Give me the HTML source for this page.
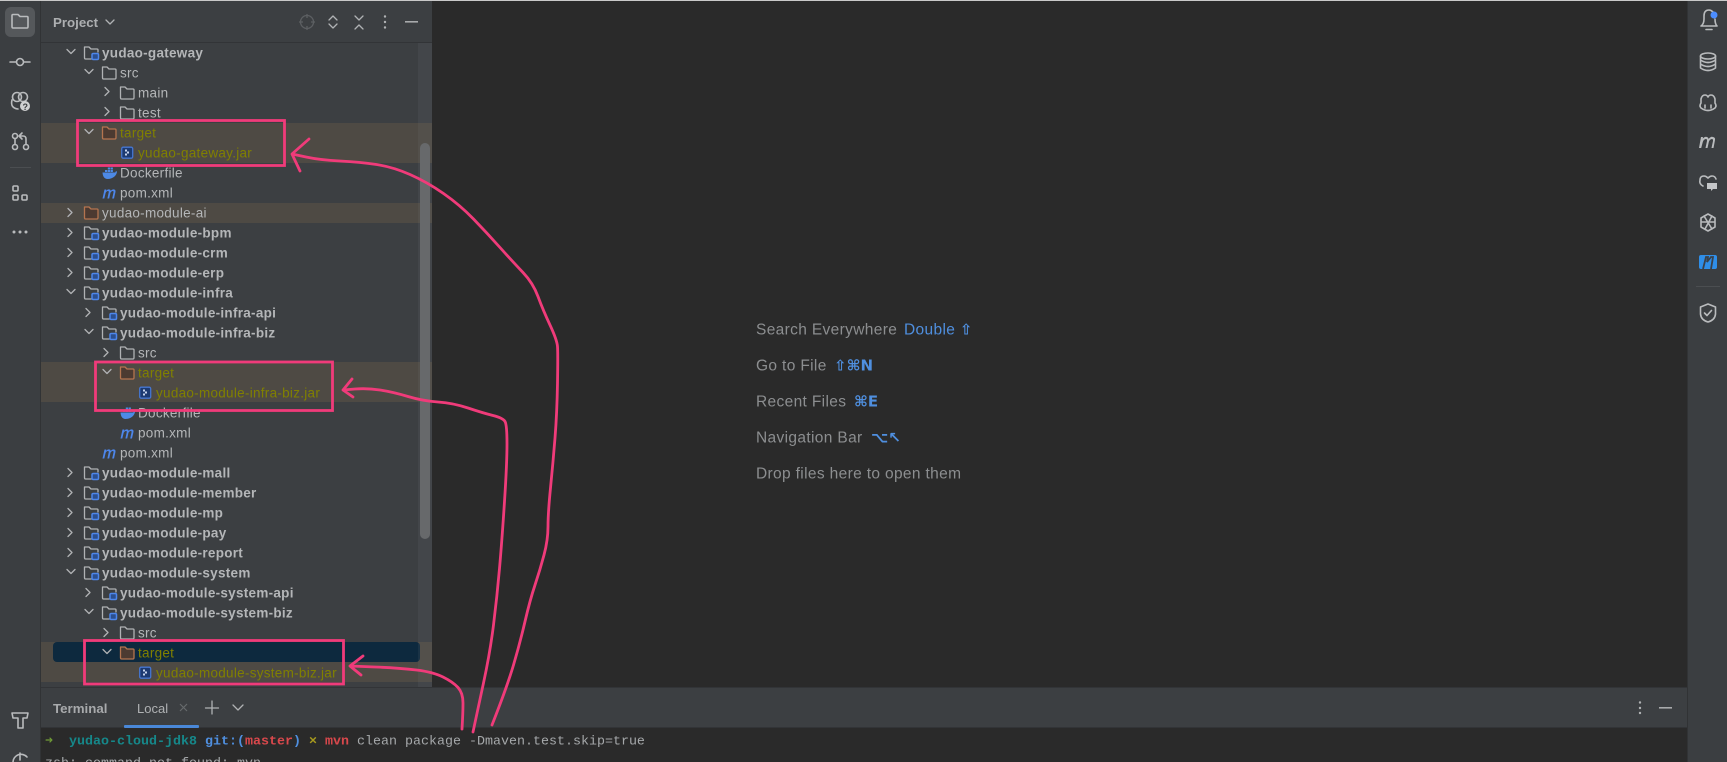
<!DOCTYPE html>
<html><head><meta charset="utf-8"><title>Project</title>
<style>
html,body{margin:0;padding:0;background:#2b2b2b;width:1727px;height:762px;overflow:hidden}
svg{display:block;filter:blur(.35px)}
text{font-family:"Liberation Sans",sans-serif;font-size:13.5px;letter-spacing:.28px;fill:#b4b6b8}
.b{font-weight:700}
.o{fill:#808000}
.h{font-size:13.3px;letter-spacing:0}
.e{font-size:15.5px;letter-spacing:.35px;fill:#8c8e90}
.k{font-size:15.5px;letter-spacing:.35px;fill:#4f8fdf}
.u{font-family:"DejaVu Sans",sans-serif;font-size:15px;letter-spacing:0;font-weight:700}
.m{font-family:"Liberation Mono",monospace;font-size:13.33px;letter-spacing:0;fill:#a9b7c6}
.s{fill:none;stroke:#b0b2b4;stroke-width:1.3;stroke-linecap:round;stroke-linejoin:round}
.i{fill:none;stroke:#b9bbbd;stroke-width:1.6;stroke-linecap:round;stroke-linejoin:round}
.p{fill:none;stroke:#f03b7a;stroke-width:2.8;stroke-linecap:round;stroke-linejoin:round}
.x{fill:none;stroke:#f03b7a;stroke-width:2.8}
</style></head><body>
<svg width="1727" height="762" viewBox="0 0 1727 762" xmlns="http://www.w3.org/2000/svg">
<defs>
<path id="cd" class="s" d="M-4-2 0 2 4-2"/>
<path id="cr" class="s" d="M-2-4 2 0-2 4"/>
<path id="fo" class="s" d="M.5-5.5H5L7-3.5H13Q14-3.5 14-2.500V5Q14 6.500 13 6.500H1.500Q.5 6.500 .5 5Z"/>
<g id="mod"><path class="s" d="M7 6.500H1.500Q.5 6.500 .5 5V-5.500H5L7-3.500H13Q14-3.500 14-2.500V-.5"/><rect x="8" y="1" width="6.500" height="6" rx="1.300" fill="#2b4f8f" stroke="#4d86ea" stroke-width="1.500"/></g>
<path id="tg" d="M.5-5.500H5L7-3.500H13Q14-3.500 14-2.500V5Q14 6.500 13 6.500H1.500Q.5 6.500 .5 5Z" fill="#4c3a31" stroke="#b4744f" stroke-width="1.300" stroke-linejoin="round"/>
<g id="jar"><rect x=".7" y="-5.300" width="11" height="11" rx="1.500" fill="#1d3a70" stroke="#4576d0" stroke-width="1.300"/><path d="M4-3h2v2H4zM6-1h2v2H6zM4 1h2v2H4z" fill="#c6d4ee"/></g>
<path id="pm" d="M1.500 6 3.500-3H5.300L5-1.600C6-2.800 7.500-3.400 8.500-3 9.500-2.700 9.700-2 9.700-1.500 10.800-2.900 12.300-3.400 13.300-3 14.500-2.600 14.700-1.500 14.400-.3L13 6H11.200L12.500 0C12.700-1 12.500-1.500 11.800-1.500 10.800-1.500 9.700-.5 9.400.5L8.200 6H6.400L7.700 0C7.900-1 7.700-1.500 7-1.500 6-1.500 4.900-.5 4.600.5L3.300 6Z" fill="#4d86ea"/>
<g id="dk" fill="#4d8ae6"><path d="M.5 0H13.300C13.500-1 14-1.500 15-1 14.700 3 11 6.500 5.500 6.500 2.500 6.500 .8 4 .5 0Z"/><rect x="3" y="-2.500" width="2.300" height="2"/><rect x="5.800" y="-2.500" width="2.300" height="2"/><rect x="8.600" y="-2.500" width="2.300" height="2"/><rect x="5.800" y="-5" width="2.300" height="2"/><rect x="8.600" y="-5" width="2.300" height="2"/></g>
</defs>

<!-- base -->
<rect width="1727" height="762" fill="#2a2a2a"/>
<rect width="41" height="762" fill="#3b3e41"/>
<rect x="41" width="391" height="688" fill="#3c3f42"/>
<rect x="40" width="1" height="762" fill="#313335"/>
<rect x="41" y="42" width="391" height="1" fill="#323437"/>
<rect x="1688" width="39" height="762" fill="#3b3e41"/>
<rect x="1687" width="1" height="762" fill="#313335"/>
<rect width="1727" height="1" fill="#c9c9c9"/>

<!-- tree highlights -->
<rect x="41" y="123" width="391" height="40" fill="#4e4a44"/>
<rect x="41" y="203" width="391" height="20" fill="#4e4a44"/>
<rect x="41" y="362" width="391" height="40" fill="#4e4a44"/>
<rect x="41" y="642" width="391" height="40" fill="#4e4a44"/>
<rect x="53" y="642" width="367" height="20" rx="4" fill="#0d293e"/>
<rect x="418" y="43" width="14" height="645" fill="#7a7d80" opacity=".12"/>
<rect x="420" y="143" width="10" height="396" rx="5" fill="#67696b"/>

<!-- header -->
<text x="53" y="27" class="b h" style="fill:#adafb1">Project</text>
<path class="s" d="M106 20l4 4 4-4"/>
<g fill="none" stroke="#5c5f62" stroke-width="1.300"><circle cx="307" cy="22" r="6.500"/><path d="M307 14v4M307 26v4M299 22h4M311 22h4"/></g>
<path class="s" d="M329 20l4-4 4 4M329 24l4 4 4-4"/>
<path class="s" d="M355 16l4 4 4-4M355 29l4-4 4 4"/>
<g fill="#b0b2b4"><circle cx="385" cy="16.500" r="1.200"/><circle cx="385" cy="22" r="1.200"/><circle cx="385" cy="27.500" r="1.200"/></g>
<rect x="405" y="21" width="13" height="1.600" fill="#a8aaac"/>

<!-- left bar -->
<rect x="5" y="7" width="30" height="30" rx="6" fill="#55585b"/>
<path class="i" d="M12 16Q12 15 13 15H18L20 17H27Q28 17 28 18V27Q28 28.500 27 28.500H13Q12 28.500 12 27Z" transform="translate(0,-.5)"/>
<path class="i" d="M10 62h6M24 62h6"/><circle class="i" cx="20" cy="62" r="3.500"/>
<g class="i"><circle cx="17" cy="97" r="4.500"/><circle cx="23" cy="97" r="4.500"/><path d="M12 100Q10 108 18 109"/></g>
<circle cx="25" cy="106" r="5" fill="#d0d1d2"/><text x="22.500" y="110" style="font-size:9px;font-weight:700;fill:#3b3e41;letter-spacing:0">?</text>
<g class="i"><circle cx="15" cy="136" r="2.500"/><circle cx="15" cy="147" r="2.500"/><circle cx="26" cy="147" r="2.500"/><path d="M15 138.500v6M26 144.500V139Q26 136 23 136H20M22 133l-3 3 3 3"/></g>
<rect x="10" y="167" width="21" height="1" fill="#4b4e51"/>
<g class="i"><rect x="13" y="186" width="5" height="5" rx="1"/><rect x="13" y="195" width="5" height="5" rx="1"/><rect x="22" y="195" width="5" height="5" rx="1"/></g>
<g fill="#b9bbbd"><circle cx="14" cy="232" r="1.500"/><circle cx="20" cy="232" r="1.500"/><circle cx="26" cy="232" r="1.500"/></g>
<g class="i"><path d="M12 713H28L27 718H23V728H18V718H13Z"/></g>
<g class="i"><path d="M13 762A8 8 0 0 1 27 757M20 753V760"/></g>

<!-- tree rows -->
<g transform="translate(0,-.5)">
<use href="#cd" x="71" y="52"/><use href="#mod" x="84" y="53"/><text x="102" y="58" class="b">yudao-gateway</text>
<use href="#cd" x="89" y="72"/><use href="#fo" x="102" y="73"/><text x="120" y="78">src</text>
<use href="#cr" x="107" y="92"/><use href="#fo" x="120" y="93"/><text x="138" y="98">main</text>
<use href="#cr" x="107" y="112"/><use href="#fo" x="120" y="113"/><text x="138" y="118">test</text>
<use href="#cd" x="89" y="132"/><use href="#tg" x="102" y="133"/><text x="120" y="138" class="o">target</text>
<use href="#jar" x="121" y="153"/><text x="138" y="158" class="o">yudao-gateway.jar</text>
<use href="#dk" x="102" y="173"/><text x="120" y="178">Dockerfile</text>
<use href="#pm" x="101" y="193"/><text x="120" y="198">pom.xml</text>
<use href="#cr" x="70" y="213"/><use href="#tg" x="84" y="213"/><text x="102" y="218">yudao-module-ai</text>
<use href="#cr" x="70" y="233"/><use href="#mod" x="84" y="233"/><text x="102" y="238" class="b">yudao-module-bpm</text>
<use href="#cr" x="70" y="253"/><use href="#mod" x="84" y="253"/><text x="102" y="258" class="b">yudao-module-crm</text>
<use href="#cr" x="70" y="273"/><use href="#mod" x="84" y="273"/><text x="102" y="278" class="b">yudao-module-erp</text>
<use href="#cd" x="71" y="292"/><use href="#mod" x="84" y="293"/><text x="102" y="298" class="b">yudao-module-infra</text>
<use href="#cr" x="88" y="313"/><use href="#mod" x="102" y="313"/><text x="120" y="318" class="b">yudao-module-infra-api</text>
<use href="#cd" x="89" y="332"/><use href="#mod" x="102" y="333"/><text x="120" y="338" class="b">yudao-module-infra-biz</text>
<use href="#cr" x="106" y="353"/><use href="#fo" x="120" y="353"/><text x="138" y="358">src</text>
<use href="#cd" x="107" y="372"/><use href="#tg" x="120" y="373"/><text x="138" y="378" class="o">target</text>
<use href="#jar" x="139" y="393"/><text x="156" y="398" class="o">yudao-module-infra-biz.jar</text>
<use href="#dk" x="120" y="413"/><text x="138" y="418">Dockerfile</text>
<use href="#pm" x="119" y="433"/><text x="138" y="438">pom.xml</text>
<use href="#pm" x="101" y="453"/><text x="120" y="458">pom.xml</text>
<use href="#cr" x="70" y="473"/><use href="#mod" x="84" y="473"/><text x="102" y="478" class="b">yudao-module-mall</text>
<use href="#cr" x="70" y="493"/><use href="#mod" x="84" y="493"/><text x="102" y="498" class="b">yudao-module-member</text>
<use href="#cr" x="70" y="513"/><use href="#mod" x="84" y="513"/><text x="102" y="518" class="b">yudao-module-mp</text>
<use href="#cr" x="70" y="533"/><use href="#mod" x="84" y="533"/><text x="102" y="538" class="b">yudao-module-pay</text>
<use href="#cr" x="70" y="553"/><use href="#mod" x="84" y="553"/><text x="102" y="558" class="b">yudao-module-report</text>
<use href="#cd" x="71" y="572"/><use href="#mod" x="84" y="573"/><text x="102" y="578" class="b">yudao-module-system</text>
<use href="#cr" x="88" y="593"/><use href="#mod" x="102" y="593"/><text x="120" y="598" class="b">yudao-module-system-api</text>
<use href="#cd" x="89" y="612"/><use href="#mod" x="102" y="613"/><text x="120" y="618" class="b">yudao-module-system-biz</text>
<use href="#cr" x="106" y="633"/><use href="#fo" x="120" y="633"/><text x="138" y="638">src</text>
<use href="#cd" x="107" y="652"/><use href="#tg" x="120" y="653"/><text x="138" y="658" class="o">target</text>
<use href="#jar" x="139" y="673"/><text x="156" y="678" class="o">yudao-module-system-biz.jar</text>
</g>

<!-- terminal -->
<rect x="41" y="687" width="1646" height="41" fill="#3c3f42"/>
<rect x="41" y="687" width="1646" height="1" fill="#323437"/>
<rect x="41" y="727" width="1646" height="1" fill="#323437"/>
<rect x="41" y="728" width="1646" height="34" fill="#2a2a2a"/>
<text x="53" y="713" class="b h" style="fill:#a8aaac">Terminal</text>
<text x="137" y="713" style="fill:#b0b2b4;font-size:13px;letter-spacing:0">Local</text>
<path d="M180 704l7 7M187 704l-7 7" stroke="#66696c" stroke-width="1.200"/>
<path class="s" d="M212 701v13M205.500 708h13"/>
<path class="s" d="M233 705l5 5 5-5"/>
<rect x="124" y="725" width="75" height="3" rx="1" fill="#4a88d8"/>
<g fill="#b0b2b4"><circle cx="1640" cy="702.500" r="1.200"/><circle cx="1640" cy="708" r="1.200"/><circle cx="1640" cy="713" r="1.200"/></g>
<rect x="1659" y="707" width="13" height="1.600" fill="#a8aaac"/>
<g transform="translate(0,-.7)">
<text x="45" y="745" class="m" style="fill:#6f9a36;font-weight:700">➜</text>
<text x="69" y="745" class="m" style="font-weight:700;fill:#16888a">yudao-cloud-jdk8</text>
<text x="205" y="745" class="m" style="font-weight:700;fill:#4f8fdf">git:(<tspan style="fill:#d9484c">master</tspan>)</text>
<text x="309" y="745" class="m" style="font-weight:700;fill:#a89a1e">×</text>
<text x="325" y="745" class="m" style="font-weight:700;fill:#d9484c">mvn</text>
<text x="357" y="745" class="m" style="fill:#a5a8aa">clean package -Dmaven.test.skip=true</text>
<text x="45" y="767" class="m" style="fill:#a5a8aa">zsh: command not found: mvn</text>
</g>

<!-- editor hints -->
<g transform="translate(0,-.5)">
<text x="756" y="335" class="e">Search Everywhere</text><text x="904" y="335" class="k">Double <tspan class="u">⇧</tspan></text>
<text x="756" y="371" class="e">Go to File</text><text x="834" y="371" class="k u">⇧⌘N</text>
<text x="756" y="407" class="e">Recent Files</text><text x="854" y="407" class="k u">⌘E</text>
<text x="756" y="443" class="e">Navigation Bar</text><text x="871" y="443" class="k u">⌥↖</text>
<text x="756" y="479" class="e">Drop files here to open them</text>
</g>

<!-- right bar -->
<g class="i">
<path d="M1701 26Q1704 24 1704 19V16Q1704 10 1709 10Q1711 10 1713 12M1715 19Q1715 24 1717 26H1701M1706 29.500H1712"/>
<ellipse cx="1708" cy="56" rx="7.500" ry="3"/><path d="M1700.500 56V68Q1708 73 1715.500 68V56M1700.500 60Q1708 65 1715.500 60M1700.500 64Q1708 69 1715.500 64"/>
<path d="M1701 103Q1699 106 1701 108Q1708 113 1715 108Q1717 106 1715 103V99Q1714 95 1711 95Q1709 95 1708 97Q1707 95 1705 95Q1702 95 1701 99ZM1705 105v3M1711 105v3"/>
<path d="M1703 186Q1699 184 1700 180Q1700 176 1704 176Q1706 176 1708 178Q1710 176 1712 176Q1715 176 1716 179"/>
<path d="M1708 214L1715 218V227L1708 231L1701 227V218ZM1704 216L1712 229M1701 222H1715M1712 216L1705 229"/>
<path d="M1708 304L1715.500 307V314Q1715 320 1708 322Q1701 320 1700.500 314V307ZM1704.500 313L1707 315.500 1711.500 310.500"/>
</g>
<path d="M1707 183H1717V189H1713L1711 191V189H1707Z" fill="#c4c6c8"/>
<circle cx="1714" cy="15" r="3.500" fill="#4c8dff"/>
<path d="M1699 148 1701 137H1703L1702.700 138.500Q1705 136 1707 137Q1708.500 137.500 1708.500 139Q1711 136 1713 137Q1715.500 137.500 1715 140L1713.500 148H1711.500L1713 141Q1713.300 139 1711.800 139Q1709.500 139.500 1708.800 142L1707.500 148H1705.500L1707 141Q1707.300 139 1705.800 139Q1703.500 139.500 1702.800 142L1701.200 148Z" fill="#b9bbbd"/>
<rect x="1699" y="255" width="18" height="14" rx="2" fill="#2f8ee8"/>
<path d="M1703 269 1706 257H1708L1707 262 1711 257H1713L1711 269" fill="none" stroke="#3a4048" stroke-width="1.800"/>
<rect x="1696" y="286" width="24" height="1" fill="#4b4e51"/>

<!-- annotations -->
<rect class="x" x="77.500" y="120.500" width="207" height="45"/>
<rect class="x" x="95.500" y="362" width="237" height="48.500"/>
<rect class="x" x="84.500" y="640.500" width="259" height="43.500"/>
<path class="p" d="M309 139 292 154 300 171M292 154L306 157Q320 160 340 161Q360 162 376.500 164.500Q393 167 410 174.500Q427 182 443.500 193.500Q460 205 473.500 219Q487 233 500 247.500Q513 262 523 272.500Q533 283 538 296.500Q543 310 550 325Q557 340 557.500 346.500Q558 353 557.500 383Q557 413 555 438Q553 463 550.500 488Q548 513 548 526.500Q548 540 544 555Q540 570 535 585Q530 600 525 621.500Q520 643 513.500 665Q507 687 492 725"/>
<path class="p" d="M352 379 343 390 353 397M343 390L355 389Q367 388 380 390Q393 392 408 396.500Q423 401 438 402Q453 403 468 408Q483 413 493 415.500Q503 418 505 421.500Q507 425 507 444Q507 463 504.500 501.500Q502 540 499.500 568.500Q497 597 493.500 625Q490 653 483.500 683Q477 713 473 732"/>
<path class="p" d="M363 656 350 666 361 675M350 666L375 667Q400 668 416.500 670Q433 672 443 677Q453 682 458 687.500Q463 693 463 703Q463 713 462 729"/>
</svg>
</body></html>
